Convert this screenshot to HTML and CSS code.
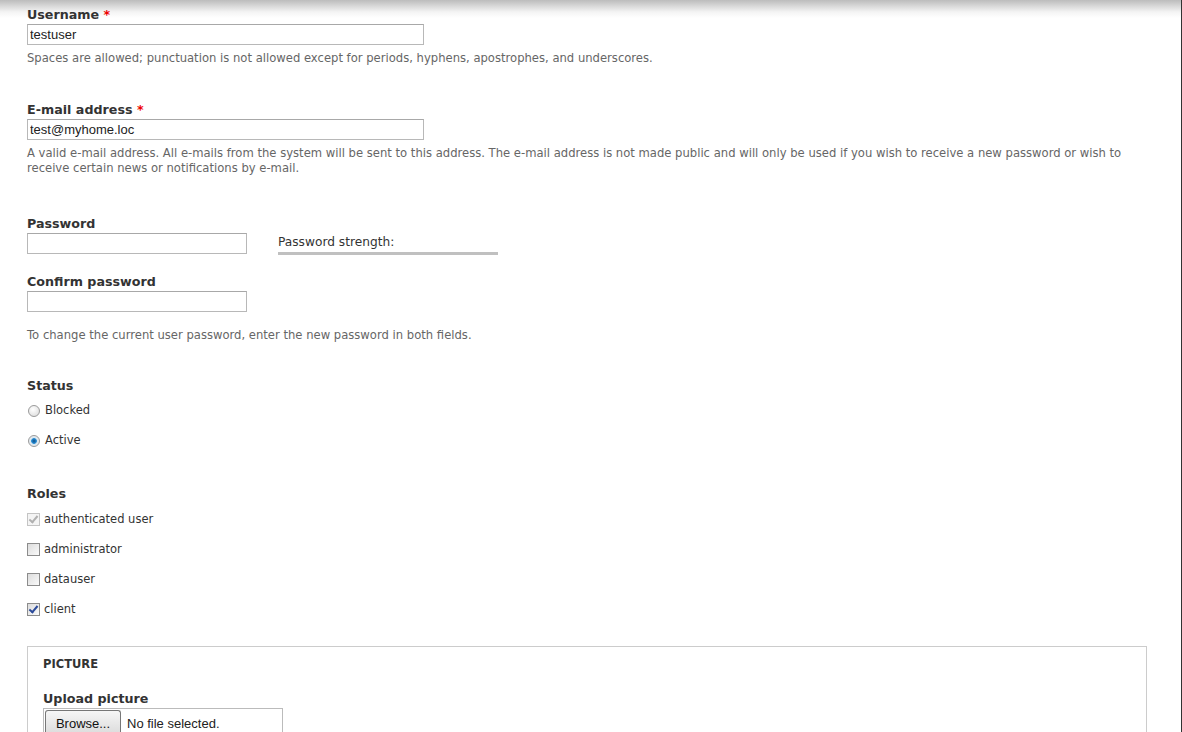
FILE: index.html
```
<!DOCTYPE html>
<html lang="en">

<head>
    <meta charset="UTF-8">
    <title>Edit account</title>
    <link rel="stylesheet" href="styles.css">
</head>

<body>
    <div class="page">
        <form class="user-form">
            <div class="form-item item-name">
                <label for="edit-name">Username <span class="required">*</span></label>
                <input type="text" id="edit-name" class="form-text wide" value="testuser">
                <div class="description">Spaces are allowed; punctuation is not allowed except for periods, hyphens, apostrophes, and underscores.</div>
            </div>

            <div class="form-item item-mail">
                <label for="edit-mail">E-mail address <span class="required">*</span></label>
                <input type="text" id="edit-mail" class="form-text wide" value="test@myhome.loc">
                <div class="description">A valid e-mail address. All e-mails from the system will be sent to this address. The e-mail address is not made public and will only be used if you wish to receive a new password or wish to receive certain news or notifications by e-mail.</div>
            </div>

            <div class="form-item item-pass">
                <div class="pass-row">
                    <div>
                        <label for="edit-pass">Password</label>
                        <input type="password" id="edit-pass" class="form-text short">
                    </div>
                    <div class="strength">
                        <div class="strength-title">Password strength:</div>
                        <div class="strength-bar"></div>
                    </div>
                </div>
                <div class="confirm">
                    <label for="edit-pass2">Confirm password</label>
                    <input type="password" id="edit-pass2" class="form-text short">
                </div>
                <div class="description pass-desc">To change the current user password, enter the new password in both fields.</div>
            </div>

            <div class="form-item item-status">
                <label>Status</label>
                <div class="option">
                    <input type="radio" id="status-0" name="status" class="radio">
                    <label for="status-0">Blocked</label>
                </div>
                <div class="option">
                    <input type="radio" id="status-1" name="status" class="radio" checked>
                    <label for="status-1">Active</label>
                </div>
            </div>

            <div class="form-item item-roles">
                <label>Roles</label>
                <div class="option">
                    <input type="checkbox" id="role-2" class="check" checked disabled>
                    <label for="role-2">authenticated user</label>
                </div>
                <div class="option">
                    <input type="checkbox" id="role-3" class="check">
                    <label for="role-3">administrator</label>
                </div>
                <div class="option">
                    <input type="checkbox" id="role-4" class="check">
                    <label for="role-4">datauser</label>
                </div>
                <div class="option">
                    <input type="checkbox" id="role-5" class="check" checked>
                    <label for="role-5">client</label>
                </div>
            </div>

            <fieldset class="picture">
                <legend>Picture</legend>
                <label>Upload picture</label>
                <div class="file-box">
                    <span class="browse">Browse...</span>
                    <span class="file-name">No file selected.</span>
                </div>
            </fieldset>
        </form>
    </div>
</body>

</html>
```

FILE: styles.css
```
html,
body {
    margin: 0;
    padding: 0;
}

body {
    background: #fff linear-gradient(#bcbcbc, #f4f4f4 12px, #fff 18px) no-repeat;
    font-family: "DejaVu Sans", Verdana, sans-serif;
    color: #333;
    overflow: hidden;
}

.page {
    min-height: 732px;
    border-right: 1px solid #333;
    padding: 7px 34px 0 27px;
}

.form-item label {
    display: block;
    font-size: 12.7px;
    font-weight: bold;
    line-height: 15px;
    margin-bottom: 2px;
    color: #333;
}

.required {
    color: #e00;
}

.form-text {
    display: block;
    box-sizing: border-box;
    height: 21px;
    margin: 0;
    padding: 1px 2px;
    border: 1px solid #b8b8b8;
    border-top-color: #a8a8a8;
    font-family: "Liberation Sans", Arial, sans-serif;
    font-size: 13px;
    color: #222;
}

.wide {
    width: 397px;
}

.short {
    width: 220px;
}

.description {
    font-size: 11.6px;
    line-height: 15px;
    color: #666;
    margin-top: 6px;
}

.item-name {
    margin-bottom: 36px;
}

.item-mail {
    margin-bottom: 40px;
}

.pass-row {
    display: flex;
    gap: 31px;
}

.strength {
    padding-top: 19px;
}

.strength-title {
    font-size: 12.2px;
    line-height: 14px;
    color: #333;
    width: 220px;
}

.strength-bar {
    height: 3px;
    background: #c0c0c0;
    margin-top: 3px;
}

.confirm {
    margin-top: 19px;
}

.pass-desc {
    margin-top: 16px;
}

.item-pass {
    margin-bottom: 35px;
}

.option {
    display: flex;
    align-items: center;
    margin-top: 15px;
}

.form-item .option label {
    font-weight: normal;
    font-size: 11.5px;
    line-height: 15px;
    margin: 0;
}

.item-status label:first-child,
.item-roles label:first-child {
    margin-bottom: 0;
}

.item-status .option:first-of-type {
    margin-top: 10px;
}

.item-roles .option:first-of-type {
    margin-top: 11px;
}

.item-status {
    margin-bottom: 38px;
}

.item-roles {
    margin-bottom: 29px;
}

.radio {
    appearance: none;
    width: 12px;
    height: 12px;
    margin: 0 5px 0 1px;
    border-radius: 50%;
    border: 1px solid #9a9a9a;
    background: radial-gradient(circle at 40% 35%, #fff, #d8d8d8);
    box-sizing: border-box;
}

.radio:checked {
    background: radial-gradient(circle, #0a4d86 0, #2a8fd6 2.5px, #dbe6ee 3.2px, #f2f2f2);
}

.check {
    appearance: none;
    width: 13px;
    height: 13px;
    margin: 0 4px 0 0;
    border: 1px solid #8c8c8c;
    background: linear-gradient(135deg, #dcdcdc, #fafafa);
    box-sizing: border-box;
    position: relative;
}

.check:checked::after {
    content: "";
    position: absolute;
    left: 3px;
    top: 0;
    width: 3px;
    height: 7px;
    border: solid #2b4a9a;
    border-width: 0 2px 2px 0;
    transform: rotate(40deg);
}

.check:disabled {
    border-color: #c4c4c4;
    background: #f4f4f4;
}

.check:disabled::after {
    border-color: #b0b0b0;
}

.picture {
    margin: 0;
    padding: 0 15px 20px;
    border: 1px solid #ccc;
    position: relative;
}

.picture legend {
    float: left;
    width: 100%;
    padding: 10px 0 0;
    font-size: 11.5px;
    font-weight: bold;
    line-height: 14px;
    text-transform: uppercase;
    color: #333;
}

.picture > label {
    clear: both;
    display: block;
    padding-top: 20px;
    font-size: 12.7px;
    font-weight: bold;
    line-height: 15px;
    margin-bottom: 2px;
}

.file-box {
    display: flex;
    align-items: flex-start;
    gap: 6px;
    width: 240px;
    height: 24px;
    box-sizing: border-box;
    border: 1px solid #bbb;
    border-bottom: 0;
    padding: 1px 0 0 1px;
    font-family: "Liberation Sans", Arial, sans-serif;
    font-size: 13px;
    line-height: 16px;
    color: #222;
}

.browse {
    display: block;
    width: 76px;
    height: 22px;
    box-sizing: border-box;
    border: 1px solid #777;
    border-bottom: 0;
    border-radius: 3px 3px 0 0;
    background: linear-gradient(#f6f6f6, #dedede);
    text-align: center;
    line-height: 16px;
    color: #111;
    padding-top: 5px;
}

.file-name {
    padding-top: 6px;
}
```
